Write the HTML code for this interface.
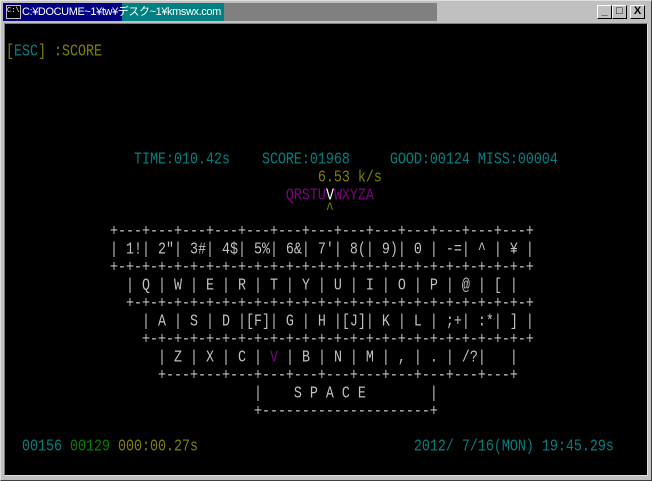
<!DOCTYPE html>
<html><head><meta charset="utf-8"><style>
*{margin:0;padding:0;box-sizing:border-box}
body{width:652px;height:481px;background:#c0c0c0;position:relative;overflow:hidden;font-family:"Liberation Sans","Noto Sans CJK JP",sans-serif}
.frame{position:absolute;left:0;top:0;width:652px;height:481px;border:1px solid #dfdfdf;border-right-color:#404040;border-bottom-color:#404040}
.tb{position:absolute;top:3px;height:18px}
.title{position:absolute;left:22px;top:3px;height:18px;line-height:18px;color:#fff;font-size:11px;letter-spacing:-0.4px}
.btn{position:absolute;top:5px;width:15px;height:14px;background:#c0c0c0;border:1px solid #fff;border-right-color:#000;border-bottom-color:#000;font-size:11px;line-height:11px;text-align:center;font-weight:bold;color:#000}
.con{position:absolute;left:4px;top:23px;width:644px;height:453px;background:#000;border:1px solid #808080;border-right-color:#dfdfdf;border-bottom-color:#dfdfdf}
pre{position:absolute;left:6px;font-family:"Liberation Mono",monospace;font-size:13.33px;line-height:18px;height:18px;color:#c0c0c0;white-space:pre;transform:scaleY(1.25);transform-origin:0 50%}
.t{color:#008080}.o{color:#808000}.p{color:#800080}.w{color:#fff}.g{color:#008000}
</style></head><body>
<div class="frame"></div>
<div class="tb" style="left:3px;width:119px;background:#000080"></div>
<div class="tb" style="left:122px;width:102px;background:#008080"></div>
<div class="tb" style="left:224px;width:213px;background:#808080"></div>
<div style="position:absolute;left:6px;top:5px;width:15px;height:14px;background:#000;border:1px solid #c0c0c0;color:#fff;font-size:7px;line-height:10px;font-family:'Liberation Mono',monospace">C:\</div>
<div class="title">C:¥DOCUME~1¥tw¥デスク~1¥kmswx.com</div>
<div class="btn" style="left:597px">_</div>
<div class="btn" style="left:612px">□</div>
<div class="btn" style="left:630px">X</div>
<div class="con"></div>
<pre style="top:44px"><span class="o">[</span><span class="t">ESC</span><span class="o">] :SCORE</span></pre>
<pre style="top:152px" class="t">                TIME:010.42s    SCORE:01968     GOOD:00124 MISS:00004</pre>
<pre style="top:170px" class="o">                                       6.53 k/s</pre>
<pre style="top:188px"><span class="p">                                   QRSTU</span><span class="w">V</span><span class="p">WXYZA</span></pre>
<pre style="top:202px" class="o">                                        ^</pre>
<pre style="top:224px">             +---+---+---+---+---+---+---+---+---+---+---+---+---+</pre>
<pre style="top:242px">             | 1!| 2"| 3#| 4$| 5%| 6&amp;| 7'| 8(| 9)| 0 | -=| ^ | ¥ |</pre>
<pre style="top:260px">             +-+-+-+-+-+-+-+-+-+-+-+-+-+-+-+-+-+-+-+-+-+-+-+-+-+-+</pre>
<pre style="top:278px">               | Q | W | E | R | T | Y | U | I | O | P | @ | [ |</pre>
<pre style="top:296px">               +-+-+-+-+-+-+-+-+-+-+-+-+-+-+-+-+-+-+-+-+-+-+-+-+-+</pre>
<pre style="top:314px">                 | A | S | D |[F]| G | H |[J]| K | L | ;+| :*| ] |</pre>
<pre style="top:332px">                 +-+-+-+-+-+-+-+-+-+-+-+-+-+-+-+-+-+-+-+-+-+-+-+-+</pre>
<pre style="top:350px">                   | Z | X | C | <span class="p">V</span> | B | N | M | , | . | /?|   |</pre>
<pre style="top:368px">                   +---+---+---+---+---+---+---+---+---+---+---+</pre>
<pre style="top:386px">                               |    S P A C E        |</pre>
<pre style="top:404px">                               +---------------------+</pre>
<pre style="top:439px"><span class="t">  00156</span> <span class="g">00129</span> <span class="o">000:00.27s</span><span class="t">                           2012/ 7/16(MON) 19:45.29s</span></pre>
</body></html>
